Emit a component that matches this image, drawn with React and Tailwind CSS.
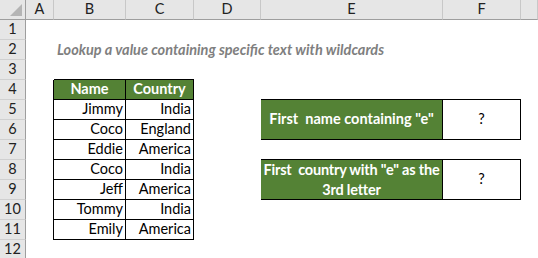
import React from 'react'

// grid rows: 1 = column letters, 2..13 = sheet rows 1..12
const ROW_START = [
  'row-start-1', 'row-start-2', 'row-start-3', 'row-start-4', 'row-start-5', 'row-start-6', 'row-start-7',
  'row-start-8', 'row-start-9', 'row-start-10', 'row-start-11', 'row-start-12', 'row-start-13',
]
const COL_START = ['col-start-1', 'col-start-2', 'col-start-3', 'col-start-4', 'col-start-5', 'col-start-6', 'col-start-7', 'col-start-8']

const COLS = ['A', 'B', 'C', 'D', 'E', 'F', '']
const ROWS = [1, 2, 3, 4, 5, 6, 7, 8, 9, 10, 11, 12]

const people = [
  ['Jimmy', 'India'],
  ['Coco', 'England'],
  ['Eddie', 'America'],
  ['Coco', 'India'],
  ['Jeff', 'America'],
  ['Tommy', 'India'],
  ['Emily', 'America'],
]

export default function App() {
  return (
    <div className="w-[538px] h-[258px] overflow-hidden bg-white text-[14.5px] text-black font-['Lato','Open_Sans',sans-serif] grid grid-cols-[26px_28px_72px_68px_67px_182px_78px_17px] grid-rows-[20px_repeat(12,20px)]">
      {/* corner */}
      <div className="relative col-start-1 row-start-1 bg-[#e6e6e6] border-r border-b border-[#9e9e9e]">
        <div className="absolute right-[3px] bottom-[3px] w-0 h-0 border-l-[12px] border-l-transparent border-b-[12px] border-b-[#b4b4b4]" />
      </div>

      {/* column headers */}
      {COLS.map((c, i) => (
        <div
          key={'c' + i}
          className={`${COL_START[i + 1]} row-start-1 bg-[#e6e6e6] border-r border-[#c8c8c8] border-b border-b-[#9e9e9e] flex items-center justify-center text-[#222] leading-none`}
        >
          {c}
        </div>
      ))}

      {/* row headers */}
      {ROWS.map(r => (
        <div
          key={'r' + r}
          className={`col-start-1 ${ROW_START[r]} bg-[#e6e6e6] border-r border-r-[#9e9e9e] border-b border-b-[#d0d0d0] flex items-center justify-center text-[#222] leading-none`}
        >
          {r}
        </div>
      ))}

      {/* title */}
      <div className="col-start-3 row-start-3 whitespace-nowrap pl-[3px] flex items-center font-bold italic text-[#7f7f7f] leading-none">
        Lookup a value containing specific text with wildcards
      </div>

      {/* table frame: top line under row 3, left line on column A */}
      <div className="col-start-3 col-span-2 row-start-4 border-b border-black" />
      <div className="col-start-2 row-start-5 row-span-8 border-r border-black" />

      {/* table header */}
      <div className="col-start-3 row-start-5 bg-[#548235] text-white font-bold border-r border-b border-black flex items-center justify-center leading-none">
        Name
      </div>
      <div className="col-start-4 row-start-5 bg-[#548235] text-white font-bold border-r border-b border-black flex items-center justify-center leading-none">
        Country
      </div>

      {people.map(([name, country], i) => (
        <React.Fragment key={i}>
          <div className={`col-start-3 ${ROW_START[i + 5]} border-r border-b border-black flex items-center justify-end pr-[2px] leading-none`}>
            {name}
          </div>
          <div className={`col-start-4 ${ROW_START[i + 5]} border-r border-b border-black flex items-center justify-end pr-[2px] leading-none`}>
            {country}
          </div>
        </React.Fragment>
      ))}

      {/* lookup box 1 */}
      <div className="col-start-6 col-span-2 row-start-5 border-b border-black" />
      <div className="col-start-6 row-start-6 row-span-2 bg-[#548235] text-white font-bold border-r border-b border-black flex items-center justify-center whitespace-pre leading-none">
        {'First  name containing "e"'}
      </div>
      <div className="col-start-7 row-start-6 row-span-2 border-r border-b border-black flex items-center justify-center leading-none">
        ?
      </div>

      {/* lookup box 2 */}
      <div className="col-start-6 col-span-2 row-start-8 border-b border-black" />
      <div className="col-start-6 row-start-9 row-span-2 bg-[#548235] text-white font-bold border-r border-b border-black flex items-center justify-center text-center whitespace-pre leading-[20px] tracking-[-0.2px] overflow-hidden">
        {'First  country with "e" as the\n3rd letter'}
      </div>
      <div className="col-start-7 row-start-9 row-span-2 border-r border-b border-black flex items-center justify-center leading-none">
        ?
      </div>
    </div>
  )
}
